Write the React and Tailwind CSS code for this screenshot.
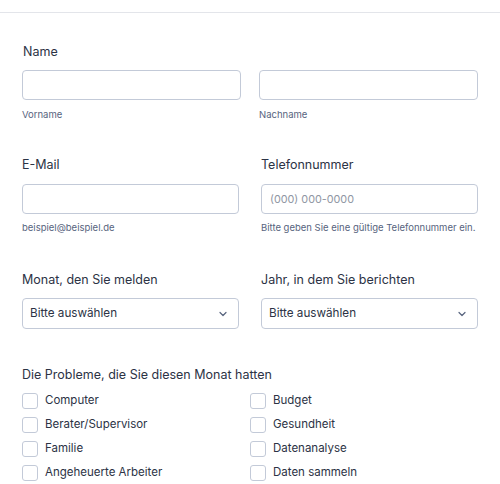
import { ChevronDown } from 'lucide-react'

const font = { fontFamily: 'Inter, "Noto Sans", sans-serif' }

function Label({ children, className = '' }) {
  return <div className={`text-[12.5px] leading-5 text-[#2c3345] ${className}`}>{children}</div>
}

function Sub({ children }) {
  return <div className="mt-[8px] whitespace-nowrap text-[9.5px] leading-[14px] text-[#57647e]">{children}</div>
}

function Input({ placeholder }) {
  return (
    <input
      placeholder={placeholder}
      className="block h-[30px] w-full rounded-[4px] border border-[#c3cad8] bg-white px-[8px] text-[10.8px] text-[#2c3345] placeholder:text-[#8f96a3] outline-none"
    />
  )
}

function Select() {
  return (
    <div className="flex h-[31px] items-center justify-between rounded-[4px] border border-[#c3cad8] bg-white pl-[7px] pr-[9px] text-[11.7px] text-[#2c3345]">
      <span>Bitte auswählen</span>
      <ChevronDown size={12} strokeWidth={2.4} className="text-[#57647e]" />
    </div>
  )
}

const left = ['Computer', 'Berater/Supervisor', 'Familie', 'Angeheuerte Arbeiter']
const right = ['Budget', 'Gesundheit', 'Datenanalyse', 'Daten sammeln']

function Check({ label }) {
  return (
    <div className="flex h-[24px] items-center gap-[7px]">
      <span className="block h-[16px] w-[16px] rounded-[3px] border border-[#c3cad8] bg-white" />
      <span className="text-[11.5px] text-[#2c3345]">{label}</span>
    </div>
  )
}

export default function App() {
  return (
    <div className="h-[484px] w-[500px] overflow-hidden bg-white" style={font}>
      <div className="h-[13px] border-b border-[#e3e5ea]" />
      <div className="px-[22px]">
        <Label className="mt-[29px] pl-[1px]">Name</Label>
        <div className="mt-[8px] grid grid-cols-2 gap-x-[18px]">
          <div>
            <Input />
            <Sub>Vorname</Sub>
          </div>
          <div>
            <Input />
            <Sub>Nachname</Sub>
          </div>
        </div>

        <div className="mt-[33px] grid grid-cols-2 gap-x-[22px]">
          <div>
            <Label>E-Mail</Label>
            <div className="mt-[9px]"><Input /></div>
            <div className="-mt-[1px]"><Sub>beispiel@beispiel.de</Sub></div>
          </div>
          <div>
            <Label>Telefonnummer</Label>
            <div className="mt-[9px]"><Input placeholder="(000) 000-0000" /></div>
            <div className="-mt-[1px]"><Sub>Bitte geben Sie eine gültige Telefonnummer ein.</Sub></div>
          </div>
        </div>

        <div className="mt-[35px] grid grid-cols-2 gap-x-[22px]">
          <div>
            <Label>Monat, den Sie melden</Label>
            <div className="mt-[8px]"><Select /></div>
          </div>
          <div>
            <Label>Jahr, in dem Sie berichten</Label>
            <div className="mt-[8px]"><Select /></div>
          </div>
        </div>

        <Label className="mt-[36px]">Die Probleme, die Sie diesen Monat hatten</Label>
        <div className="mt-[4px] grid grid-cols-[228px_1fr]">
          <div>
            {left.map(l => <Check key={l} label={l} />)}
          </div>
          <div>
            {right.map(l => <Check key={l} label={l} />)}
          </div>
        </div>
      </div>
    </div>
  )
}
